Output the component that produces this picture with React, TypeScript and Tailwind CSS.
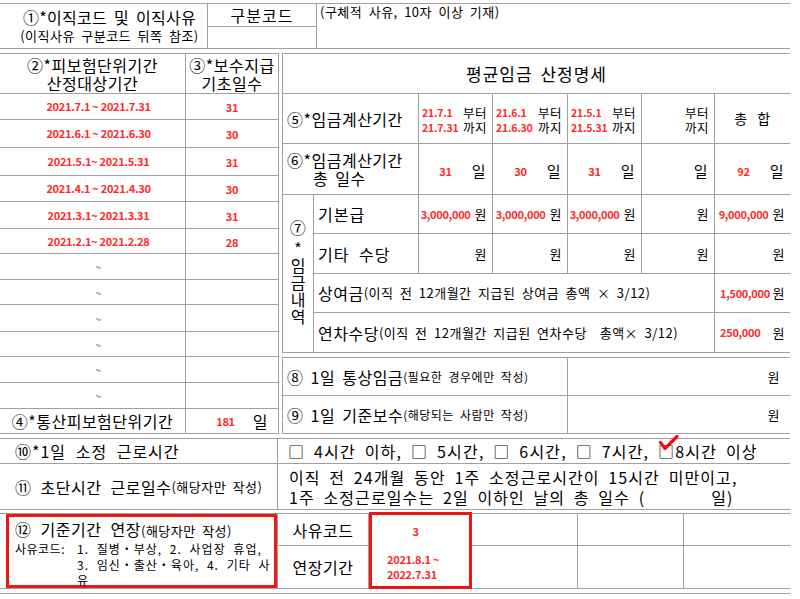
import React from "react";

const B = "border-[#a0a0a0]";
const RED = "text-[#ff2a2a] font-bold text-[11px] tracking-[-0.3px] [word-spacing:0px]";

function Box({ checked }: { checked?: boolean }) {
  return (
    <span className="relative inline-block">
      □
      {checked && (
        <svg
          className="absolute left-[0px] top-[-4px]"
          width="22"
          height="20"
          viewBox="0 0 22 20"
        >
          <path
            d="M2.5 7.5 L7 13.5 L19 1.5"
            stroke="#f01010"
            strokeWidth="3.2"
            fill="none"
            strokeLinecap="round"
            strokeLinejoin="round"
          />
        </svg>
      )}
    </span>
  );
}

const leftRows: { d: string; n: string; h: string }[] = [
  { d: "2021.7.1 ~ 2021.7.31", n: "31", h: "h-[26px]" },
  { d: "2021.6.1 ~ 2021.6.30", n: "30", h: "h-[28px]" },
  { d: "2021.5.1~ 2021.5.31", n: "31", h: "h-[28px]" },
  { d: "2021.4.1 ~ 2021.4.30", n: "30", h: "h-[26px]" },
  { d: "2021.3.1~ 2021.3.31", n: "31", h: "h-[27px]" },
  { d: "2021.2.1~ 2021.2.28", n: "28", h: "h-[25px]" },
  { d: "", n: "", h: "h-[26px]" },
  { d: "", n: "", h: "h-[25px]" },
  { d: "", n: "", h: "h-[27px]" },
  { d: "", n: "", h: "h-[25px]" },
  { d: "", n: "", h: "h-[26px]" },
  { d: "", n: "", h: "h-[26px]" },
];

const PRED = "text-[#ff2a2a] font-bold text-[10.5px] tracking-[-0.2px] whitespace-nowrap";

function PeriodCell({ a, b, last }: { a: string; b: string; last?: boolean }) {
  return (
    <div className={`border-b ${last ? "" : "border-r"} ${B} flex flex-col justify-center pl-[3px] pr-[5px] pt-[2px]`}>
      <div className="flex items-center justify-between leading-[15px] whitespace-nowrap">
        <span className={PRED}>{a}</span>
        <span className="text-[12.5px] tracking-[0.5px]">부터</span>
      </div>
      <div className="flex items-center justify-between leading-[15px] whitespace-nowrap">
        <span className={PRED}>{b}</span>
        <span className="text-[12.5px] tracking-[0.5px]">까지</span>
      </div>
    </div>
  );
}

function DayCell({ v, last }: { v: string; last?: boolean }) {
  return (
    <div className={`border-b ${last ? "" : "border-r"} ${B} flex items-center justify-end pr-[6px] pt-[4px]`}>
      {v && <span className={`${RED} mr-[20px]`}>{v}</span>}
      <span className="text-[15px]">일</span>
    </div>
  );
}

function WonCell({ v, last }: { v: string; last?: boolean }) {
  return (
    <div className={`border-b ${last ? "" : "border-r"} ${B} flex items-center justify-end gap-[4px] pr-[5px] whitespace-nowrap`}>
      {v && <span className={RED}>{v}</span>}
      <span className="text-[13px]">원</span>
    </div>
  );
}

export default function App() {
  return (
    <div className="w-[800px] h-[599px] bg-white overflow-hidden text-black font-['Noto_Sans_CJK_KR','Noto_Sans',sans-serif] [word-spacing:3px] tracking-[0.5px]">
      {/* Section 1 */}
      <div className="pt-[3px]">
        <div className={`grid grid-cols-[208px_109px_1fr] w-[790px] h-[46px] border-t border-b ${B}`}>
          <div className={`border-r ${B} flex flex-col items-center justify-center pl-[12px]`}>
            <div className="text-[16px] leading-[20px] tracking-[0.3px]">①*이직코드 및 이직사유</div>
            <div className="text-[13px] leading-[18px]">(이직사유 구분코드 뒤쪽 참조)</div>
          </div>
          <div className={`border-r ${B} grid grid-rows-[23px_1fr]`}>
            <div className={`border-b ${B} flex items-center justify-center text-[16px] tracking-[1px]`}>구분코드</div>
            <div />
          </div>
          <div className="pl-[3px] text-[13px] leading-[16px]">(구체적 사유, 10자 이상 기재)</div>
        </div>
      </div>

      {/* Section 2 */}
      <div className="mt-[4px] flex w-[790px]">
        {/* left table */}
        <div className={`w-[279px] border-t ${B} flex flex-col`}>
          <div className={`grid grid-cols-[186px_93px] h-[40px] border-b ${B}`}>
            <div className={`border-r ${B} flex flex-col items-center justify-center text-[16px] leading-[18px]`}>
              <div>②*피보험단위기간</div>
              <div>산정대상기간</div>
            </div>
            <div className={`border-r ${B} flex flex-col items-center justify-center text-[16px] leading-[18px]`}>
              <div>③*보수지급</div>
              <div>기초일수</div>
            </div>
          </div>
          {leftRows.map((r, i) => (
            <div key={i} className={`grid grid-cols-[186px_93px] ${r.h} border-b ${B}`}>
              <div className={`border-r ${B} flex items-center justify-center pl-[12px]`}>
                {r.d ? (
                  <span className={RED}>{r.d}</span>
                ) : (
                  <span className="text-[10px] text-[#666]">~</span>
                )}
              </div>
              <div className={`border-r ${B} flex items-center justify-center pt-[2px]`}>
                <span className={RED}>{r.n}</span>
              </div>
            </div>
          ))}
          <div className={`grid grid-cols-[186px_93px] h-[25px] border-b ${B}`}>
            <div className={`border-r ${B} flex items-center justify-center text-[16px]`}>④*통산피보험단위기간</div>
            <div className={`border-r ${B} flex items-center justify-end pr-[10px]`}>
              <span className={`${RED} mr-[18px]`}>181</span>
              <span className="text-[16px]">일</span>
            </div>
          </div>
        </div>

        {/* right column */}
        <div className="ml-[3px] w-[508px] flex flex-col">
          <div className={`grid grid-cols-[31px_105px_74px_75px_74px_73px_75px] grid-rows-[40px_50px_51px_39px_40px_39px_40px] border-t border-l ${B}`}>
            <div className={`col-span-7 border-b ${B} flex items-center justify-center text-[17px] tracking-[1px]`}>평균임금 산정명세</div>

            <div className={`col-span-2 border-b border-r ${B} flex items-center pl-[4px] text-[16px]`}>⑤*임금계산기간</div>
            <PeriodCell a="21.7.1" b="21.7.31" />
            <PeriodCell a="21.6.1" b="21.6.30" />
            <PeriodCell a="21.5.1" b="21.5.31" />
            <PeriodCell a="" b="" />
            <div className={`border-b ${B} flex items-center justify-center text-[14px] [word-spacing:6px]`}>총 합</div>

            <div className={`col-span-2 border-b border-r ${B} flex flex-col justify-center pl-[4px] text-[16px] leading-[18px]`}>
              <div>⑥*임금계산기간</div>
              <div className="pl-[26px]">총 일수</div>
            </div>
            <DayCell v="31" />
            <DayCell v="30" />
            <DayCell v="31" />
            <DayCell v="" />
            <DayCell v="92" last />

            <div className={`row-span-4 border-b border-r ${B} flex flex-col items-center justify-center text-[16px] pb-[4px]`}>
              <div className="leading-[20px]">⑦</div>
              <div className="mt-[4px] [writing-mode:vertical-rl] [text-orientation:upright] tracking-[1px] leading-[16px]">*임금내역</div>
            </div>

            <div className={`border-b border-r ${B} flex items-center pl-[4px] text-[16px] tracking-[1px]`}>기본급</div>
            <WonCell v="3,000,000" />
            <WonCell v="3,000,000" />
            <WonCell v="3,000,000" />
            <WonCell v="" />
            <WonCell v="9,000,000" last />

            <div className={`border-b border-r ${B} flex items-center pl-[4px] text-[16px] tracking-[1px] [word-spacing:5px]`}>기타 수당</div>
            <WonCell v="" />
            <WonCell v="" />
            <WonCell v="" />
            <WonCell v="" />
            <WonCell v="" last />

            <div className={`col-span-5 border-b border-r ${B} flex items-center pl-[4px]`}>
              <span className="text-[16px]">상여금</span>
              <span className="text-[13px]">(이직 전 12개월간 지급된 상여금 총액 × 3/12)</span>
            </div>
            <div className={`border-b ${B} flex items-center justify-between pl-[5px] pr-[5px] whitespace-nowrap`}>
              <span className={RED}>1,500,000</span>
              <span className="text-[13px]">원</span>
            </div>

            <div className={`col-span-5 border-b border-r ${B} flex items-center pl-[4px]`}>
              <span className="text-[16px]">연차수당</span>
              <span className="text-[13px]">(이직 전 12개월간 지급된 연차수당 &nbsp;총액× 3/12)</span>
            </div>
            <div className={`border-b ${B} flex items-center justify-between pl-[5px] pr-[5px] whitespace-nowrap`}>
              <span className={RED}>250,000</span>
              <span className="text-[13px]">원</span>
            </div>
          </div>

          <div className={`mt-[4px] grid grid-cols-[285px_222px] grid-rows-[38px_38px] border-t border-l ${B}`}>
            <div className={`border-b border-r ${B} flex items-center pl-[4px]`}>
              <span className="text-[16px]">⑧ 1일 통상임금</span>
              <span className="text-[12px]">(필요한 경우에만 작성)</span>
            </div>
            <div className={`border-b ${B} flex items-center justify-end pr-[10px] text-[13px]`}>원</div>
            <div className={`border-b border-r ${B} flex items-center pl-[4px]`}>
              <span className="text-[16px]">⑨ 1일 기준보수</span>
              <span className="text-[12px]">(해당되는 사람만 작성)</span>
            </div>
            <div className={`border-b ${B} flex items-center justify-end pr-[10px] text-[13px]`}>원</div>
          </div>
        </div>
      </div>

      {/* Section 10/11 */}
      <div className={`mt-[4px] w-[790px] grid grid-cols-[278px_512px] grid-rows-[25px_46px] border-t ${B}`}>
        <div className={`border-b border-r ${B} flex items-center pl-[15px] text-[16px] [word-spacing:5px] tracking-[1px]`}>⑩*1일 소정 근로시간</div>
        <div className={`border-b ${B} flex items-center pl-[10px] text-[16px] [word-spacing:4px] tracking-[1.2px] whitespace-nowrap`}>
          <Box />&nbsp;4시간 이하,&nbsp;<Box />&nbsp;5시간,&nbsp;<Box />&nbsp;6시간,&nbsp;<Box />&nbsp;7시간,&nbsp;<Box checked />8시간 이상
        </div>
        <div className={`border-b border-r ${B} flex items-center pl-[15px] whitespace-nowrap`}>
          <span className="text-[16px] [word-spacing:5px]">⑪ 초단시간 근로일수</span>
          <span className="text-[13px]">(해당자만 작성)</span>
        </div>
        <div className={`border-b ${B} flex flex-col justify-center pl-[11px] text-[16px] leading-[20px] [word-spacing:4px] tracking-[1.1px] whitespace-nowrap`}>
          <div>이직 전 24개월 동안 1주 소정근로시간이 15시간 미만이고,</div>
          <div>
            1주 소정근로일수는 2일 이하인 날의 총 일수 (<span className="inline-block w-[66px]" />일)
          </div>
        </div>
      </div>

      {/* Section 12 */}
      <div className={`mt-[3px] w-[790px] grid grid-cols-[278px_91px_103px_106px_106px_106px] grid-rows-[32px_43px] border-t ${B}`}>
        <div className={`row-span-2 border-b border-r ${B} flex`}>
          <div className="ml-[6px] flex-1 border-[3px] border-[#f01515] pl-[6px] pt-[2px]">
            <div className="leading-[20px] whitespace-nowrap">
              <span className="text-[16px] [word-spacing:5px]">⑫ 기준기간 연장</span>
              <span className="text-[13px]">(해당자만 작성)</span>
            </div>
            <div className="flex text-[12px] leading-[15.5px] [word-spacing:4px] tracking-[1px] whitespace-nowrap">
              <div className="w-[62px] shrink-0 tracking-[0.5px]">사유코드:</div>
              <div>
                <div>1. 질병・부상, 2. 사업장 휴업,</div>
                <div>3. 임신・출산・육아, 4. 기타 사</div>
                <div>유</div>
              </div>
            </div>
          </div>
        </div>
        <div className={`border-b border-r ${B} flex items-center justify-center text-[16px] tracking-[0.5px]`}>사유코드</div>
        <div className="row-span-2 -mt-[2px] border-[3px] border-[#f01515] flex flex-col">
          <div className="h-[32px] flex items-center justify-center pr-[10px]">
            <span className={RED}>3</span>
          </div>
          <div className="flex-1 flex flex-col justify-center pl-[15px] leading-[15px]">
            <span className={`${RED} text-[10px]`}>2021.8.1 ~</span>
            <span className={`${RED} text-[10px]`}>2022.7.31</span>
          </div>
        </div>
        <div className={`border-b border-r ${B}`} />
        <div className={`border-b border-r ${B}`} />
        <div className={`border-b ${B}`} />
        <div className={`border-b border-r ${B} flex items-center justify-center text-[16px] tracking-[0.5px]`}>연장기간</div>
        <div className={`border-b border-r ${B}`} />
        <div className={`border-b border-r ${B}`} />
        <div className={`border-b ${B}`} />
      </div>
      <div className={`mt-[4px] w-[790px] border-t ${B}`} />
    </div>
  );
}
